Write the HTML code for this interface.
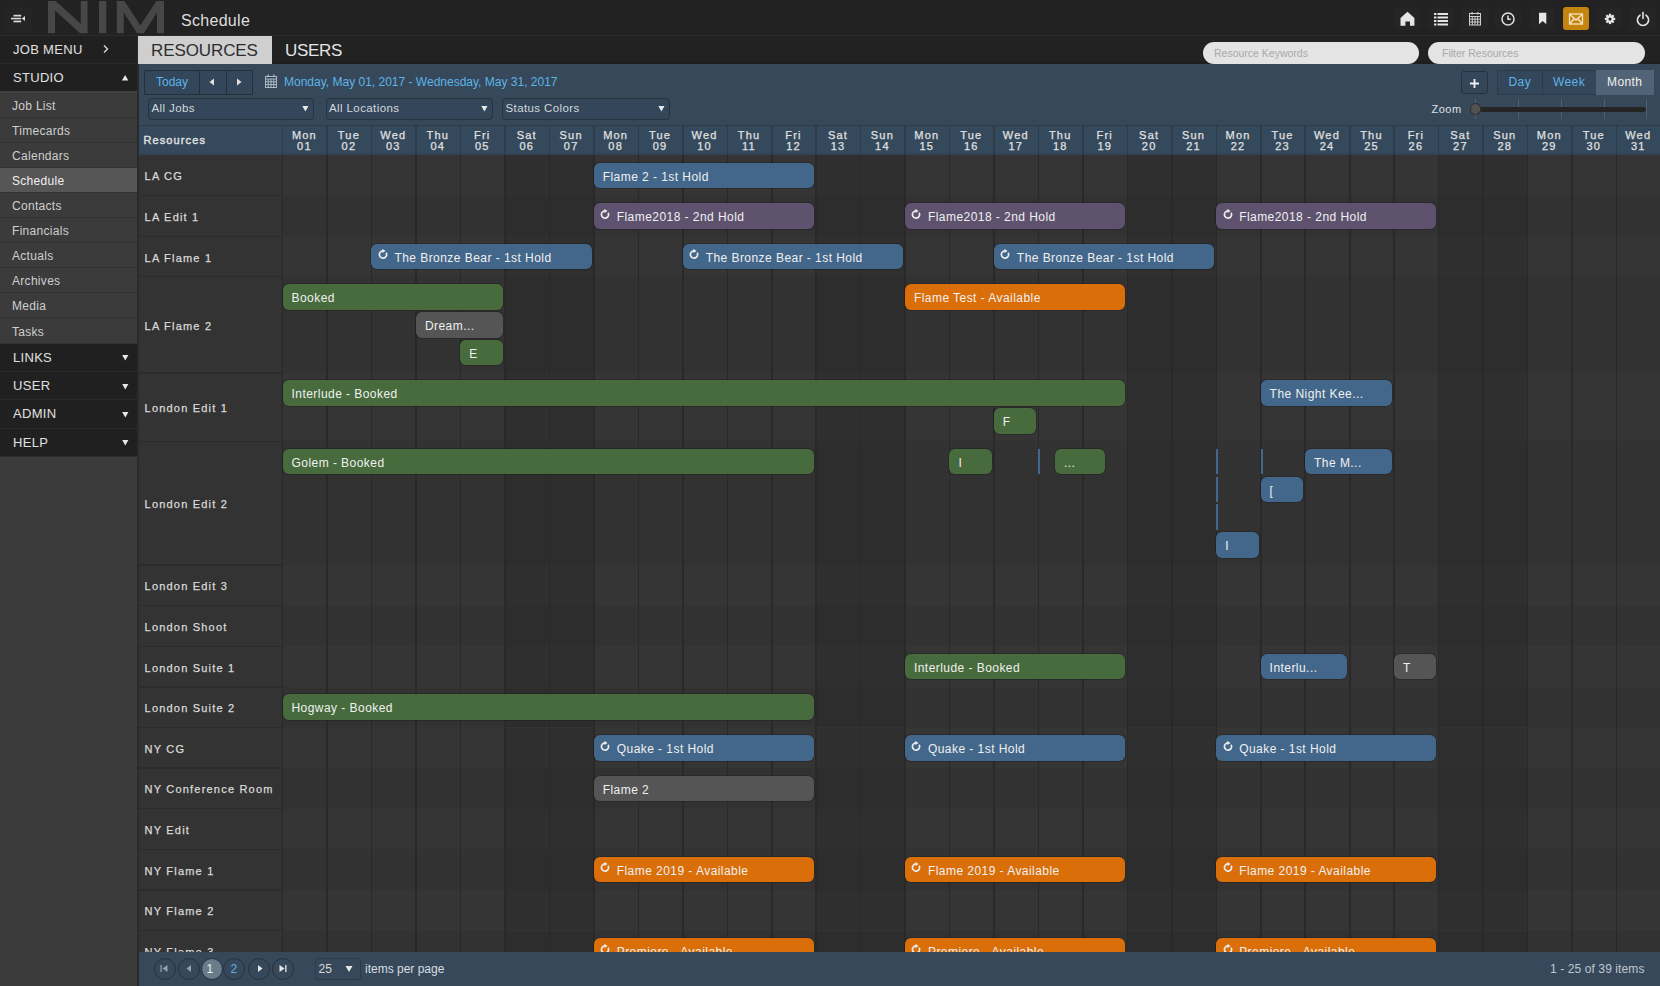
<!DOCTYPE html><html><head><meta charset="utf-8"><style>
*{margin:0;padding:0;box-sizing:border-box}
html,body{width:1660px;height:986px;overflow:hidden;background:#222222;font-family:"Liberation Sans", sans-serif;}
.a{position:absolute}
.t{position:absolute;white-space:nowrap}
.ev{position:absolute;height:25.7px;box-shadow:0 0 0 1px rgba(0,0,0,0.18);border-radius:6px;color:#f0f0f0;font-size:12px;letter-spacing:0.45px;line-height:28px;padding-left:9px;white-space:nowrap;overflow:hidden}
.rn{position:absolute;left:144.6px;color:#dadada;font-size:11px;font-weight:normal;-webkit-text-stroke:0.25px #dadada;letter-spacing:1.2px;white-space:nowrap}
.sbi{position:absolute;left:0;width:137px;height:25.1px;background:#3b3b3b;border-bottom:1px solid #333;color:#cfcfcf;font-size:12px;letter-spacing:0.3px;padding-left:12px;line-height:27px}
.sbh{position:absolute;left:0;width:137px;background:#202020;border-bottom:1px solid #2b2b2b;color:#e0e0e0;font-size:13px;letter-spacing:0.3px;padding-left:13px}
.dh{position:absolute;top:129.5px;width:44.46px;text-align:center;color:#e0e0e0;font-size:11px;font-weight:normal;-webkit-text-stroke:0.25px #e0e0e0;letter-spacing:1.2px;line-height:11px}
</style></head><body>

<div class="a" style="left:0;top:0;width:1660px;height:35px;background:#222222"></div>
<div class="a" style="left:0;top:35px;width:1660px;height:1px;background:#2c2c2c"></div>
<div class="a" style="left:4px;top:7px;width:27.5px;height:25.5px;background:#242424;border-radius:4px"></div>
<svg class="a" style="left:0;top:0" width="36" height="36" viewBox="0 0 36 36"><g fill="#dcdcdc"><rect x="13.5" y="14.8" width="7.7" height="1.7"/><rect x="11" y="17.8" width="10.2" height="1.5"/><rect x="13.5" y="20.6" width="7.7" height="1.7"/><path d="M21.8 18.5L25 16V21Z"/></g></svg>
<svg class="a" style="left:0;top:0" width="170" height="35" viewBox="0 0 170 35"><g fill="#474747"><path d="M48 1H55.6L80.8 23.8V1H87.6V33.3H80.2L55 10.6V33.3H48Z"/><rect x="99" y="1" width="7.3" height="32.3"/><path d="M116.8 1H124.4L140.4 25.5L156.4 1H164V33.3H157V12.5L143.8 33.3H137L123.8 12.5V33.3H116.8Z"/></g></svg>
<div class="t" style="left:181px;top:12px;font-size:16px;color:#dedede;letter-spacing:0.3px;line-height:18px">Schedule</div>
<div class="a" style="left:1394px;top:7.3px;width:26px;height:22.4px;background:#252525;border-radius:3px"></div>
<div class="a" style="left:1428px;top:7.3px;width:26px;height:22.4px;background:#252525;border-radius:3px"></div>
<div class="a" style="left:1462px;top:7.3px;width:26px;height:22.4px;background:#252525;border-radius:3px"></div>
<div class="a" style="left:1495px;top:7.3px;width:26px;height:22.4px;background:#252525;border-radius:3px"></div>
<div class="a" style="left:1529px;top:7.3px;width:26px;height:22.4px;background:#252525;border-radius:3px"></div>
<div class="a" style="left:1563px;top:7.3px;width:26px;height:22.4px;background:#c4850f;border-radius:3px"></div>
<div class="a" style="left:1596px;top:7.3px;width:26px;height:22.4px;background:#252525;border-radius:3px"></div>
<div class="a" style="left:1630px;top:7.3px;width:26px;height:22.4px;background:#252525;border-radius:3px"></div>
<svg class="a" style="left:1399px;top:11px" width="16" height="16" viewBox="0 0 16 16"><path d="M1.5 7L8.5 0.8L15.4 7V14.7H11V10.5H6.4V14.7H1.5Z" fill="#e6e6e6"/></svg>
<svg class="a" style="left:1433px;top:11px" width="16" height="16" viewBox="0 0 16 16"><g fill="#e4e4e4"><rect x="1" y="2" width="2.4" height="2"/><rect x="4.5" y="2" width="10.5" height="2"/><rect x="1" y="5.5" width="2.4" height="2"/><rect x="4.5" y="5.5" width="10.5" height="2"/><rect x="1" y="9" width="2.4" height="2"/><rect x="4.5" y="9" width="10.5" height="2"/><rect x="1" y="12.5" width="2.4" height="2"/><rect x="4.5" y="12.5" width="10.5" height="2"/></g></svg>
<svg class="a" style="left:1467px;top:11px" width="16" height="16" viewBox="0 0 16 16"><g fill="none" stroke="#cfcfcf" stroke-width="1"><rect x="2.5" y="2.5" width="11" height="11.5"/><path d="M2.5 5.5H13.5M2.5 8.2H13.5M2.5 11H13.5M5.3 5.5V14M8 5.5V14M10.7 5.5V14"/></g><rect x="4.5" y="1" width="1.2" height="2.5" fill="#cfcfcf"/><rect x="10.3" y="1" width="1.2" height="2.5" fill="#cfcfcf"/></svg>
<svg class="a" style="left:1500px;top:11px" width="16" height="16" viewBox="0 0 16 16"><g fill="none" stroke="#e0e0e0" stroke-width="1.5"><circle cx="8" cy="8" r="6"/><path d="M8 4.5V8.3H10.8"/></g></svg>
<svg class="a" style="left:1534px;top:11px" width="16" height="16" viewBox="0 0 16 16"><path d="M5 1.7H12.3V13.2L8.65 9.9L5 13.2Z" fill="#e6e6e6"/></svg>
<svg class="a" style="left:1568px;top:11px" width="16" height="16" viewBox="0 0 16 16"><g fill="none" stroke="#f4e4c4" stroke-width="1.3"><rect x="1.5" y="3" width="13" height="10"/><path d="M1.5 3L8 9L14.5 3M1.5 13L6 8M14.5 13L10 8"/></g></svg>
<svg class="a" style="left:1601px;top:11px" width="16" height="16" viewBox="0 0 16 16"><g fill="#e6e6e6"><circle cx="9" cy="7.9" r="3.7"/><rect x="7.9" y="2.7" width="2.2" height="10.4"/><rect x="3.8" y="6.8" width="10.4" height="2.2"/><rect x="7.9" y="2.7" width="2.2" height="10.4" transform="rotate(45 9 7.9)"/><rect x="7.9" y="2.7" width="2.2" height="10.4" transform="rotate(-45 9 7.9)"/></g><circle cx="9" cy="7.9" r="1.5" fill="#1a1a1a"/></svg>
<svg class="a" style="left:1635px;top:11px" width="16" height="16" viewBox="0 0 16 16"><g fill="none" stroke="#e4e4e4" stroke-width="1.6" stroke-linecap="round"><path d="M5 4.2A5.6 5.6 0 1 0 11 4.2"/><path d="M8 1.5V7.5"/></g></svg>
<div class="a" style="left:0;top:36px;width:137px;height:950px;background:#3b3b3b"></div>
<div class="a" style="left:136.5px;top:36px;width:2px;height:950px;background:#2a2a2a"></div>
<div class="sbh" style="top:35.5px;height:28px;line-height:27px">JOB MENU</div>
<svg class="a" style="left:102px;top:44px" width="8" height="10" viewBox="0 0 8 10"><path d="M2 1.5L5.5 5L2 8.5" fill="none" stroke="#d8d8d8" stroke-width="1.4"/></svg>
<div class="sbh" style="top:63.5px;height:28px;line-height:28px">STUDIO</div>
<svg class="a" style="left:121.5px;top:75.3px" width="7" height="6" viewBox="0 0 7 6"><path d="M0 5.4L3.1 0L6.2 5.4Z" fill="#e8e8e8"/></svg>
<div class="a" style="left:0;top:91.4px;width:137px;height:1.2px;background:#414141"></div>
<div class="sbi" style="top:92.5px;background:#3b3b3b;color:#cfcfcf">Job List</div>
<div class="sbi" style="top:117.6px;background:#3b3b3b;color:#cfcfcf">Timecards</div>
<div class="sbi" style="top:142.7px;background:#3b3b3b;color:#cfcfcf">Calendars</div>
<div class="sbi" style="top:167.8px;background:#565656;color:#f0f0f0">Schedule</div>
<div class="sbi" style="top:192.9px;background:#3b3b3b;color:#cfcfcf">Contacts</div>
<div class="sbi" style="top:218.1px;background:#3b3b3b;color:#cfcfcf">Financials</div>
<div class="sbi" style="top:243.2px;background:#3b3b3b;color:#cfcfcf">Actuals</div>
<div class="sbi" style="top:268.3px;background:#3b3b3b;color:#cfcfcf">Archives</div>
<div class="sbi" style="top:293.4px;background:#3b3b3b;color:#cfcfcf">Media</div>
<div class="sbi" style="top:318.5px;background:#3b3b3b;color:#cfcfcf">Tasks</div>
<div class="sbh" style="top:343.6px;height:28.4px;line-height:28px">LINKS</div>
<svg class="a" style="left:121.6px;top:355.2px" width="7" height="6" viewBox="0 0 7 6"><path d="M0.2 0L3.3 5.4L6.4 0Z" fill="#e8e8e8"/></svg>
<div class="sbh" style="top:372.0px;height:28.4px;line-height:28px">USER</div>
<svg class="a" style="left:121.6px;top:383.6px" width="7" height="6" viewBox="0 0 7 6"><path d="M0.2 0L3.3 5.4L6.4 0Z" fill="#e8e8e8"/></svg>
<div class="sbh" style="top:400.3px;height:28.4px;line-height:28px">ADMIN</div>
<svg class="a" style="left:121.6px;top:411.9px" width="7" height="6" viewBox="0 0 7 6"><path d="M0.2 0L3.3 5.4L6.4 0Z" fill="#e8e8e8"/></svg>
<div class="sbh" style="top:428.7px;height:28.4px;line-height:28px">HELP</div>
<svg class="a" style="left:121.6px;top:440.3px" width="7" height="6" viewBox="0 0 7 6"><path d="M0.2 0L3.3 5.4L6.4 0Z" fill="#e8e8e8"/></svg>
<div class="a" style="left:272px;top:60.5px;width:1388px;height:3px;background:#1e1e1e"></div>
<div class="a" style="left:138px;top:35.5px;width:134px;height:28px;background:#cfcfcf"></div>
<div class="t" style="left:151px;top:41px;font-size:17px;color:#2d2d2d;letter-spacing:-0.1px;line-height:20px">RESOURCES</div>
<div class="t" style="left:285px;top:41px;font-size:17px;color:#e4e4e4;letter-spacing:-0.3px;line-height:20px">USERS</div>
<div class="a" style="left:1202.5px;top:42px;width:216px;height:21.5px;border-radius:11px;background:#e4e4e4"></div>
<div class="t" style="left:1214px;top:46.5px;font-size:10.5px;color:#a9a9a9;line-height:13px">Resource Keywords</div>
<div class="a" style="left:1428px;top:42px;width:217px;height:21.5px;border-radius:11px;background:#e4e4e4"></div>
<div class="t" style="left:1442px;top:46.5px;font-size:10.5px;color:#a9a9a9;line-height:13px">Filter Resources</div>
<div class="a" style="left:138.5px;top:63.5px;width:1521.5px;height:62px;background:#36485a"></div>
<div class="a" style="left:144px;top:69.5px;width:109px;height:25px;border:1px solid #24313c;border-radius:1px;background:#33465a"></div>
<div class="a" style="left:198.5px;top:70px;width:1.5px;height:24px;background:#24313c"></div>
<div class="a" style="left:225.5px;top:70px;width:1.5px;height:24px;background:#24313c"></div>
<div class="t" style="left:156px;top:75px;font-size:12px;color:#5db4e6;letter-spacing:0px;line-height:14px">Today</div>
<svg class="a" style="left:209px;top:78px" width="6" height="8" viewBox="0 0 6 8"><path d="M5 0.5V7.5L0.5 4Z" fill="#e0e0e0"/></svg>
<svg class="a" style="left:236px;top:78px" width="6" height="8" viewBox="0 0 6 8"><path d="M1 0.5V7.5L5.5 4Z" fill="#e0e0e0"/></svg>
<svg class="a" style="left:265px;top:74px" width="12" height="14" viewBox="0 0 12 14"><g fill="none" stroke="#b8c4cf" stroke-width="0.9"><rect x="0.5" y="2.5" width="11" height="11"/><path d="M0.5 5H11.5M0.5 7.8H11.5M0.5 10.6H11.5M3.2 5V13.5M6 5V13.5M8.8 5V13.5"/></g><rect x="2.5" y="0.5" width="1.2" height="2.5" fill="#b8c4cf"/><rect x="8.3" y="0.5" width="1.2" height="2.5" fill="#b8c4cf"/></svg>
<div class="t" style="left:284px;top:75px;font-size:12px;color:#5db4e6;letter-spacing:0px;line-height:14px">Monday, May 01, 2017 - Wednesday, May 31, 2017</div>
<div class="a" style="left:148px;top:97.5px;width:166px;height:22px;border:1px solid #26333f;border-radius:4px;background:#33465a"></div>
<div class="t" style="left:151.5px;top:101px;font-size:11.5px;color:#d4d8dc;letter-spacing:0.4px;line-height:14px">All Jobs</div>
<svg class="a" style="left:302px;top:105.5px" width="7" height="6" viewBox="0 0 7 6"><path d="M0.3 0L3.4 5.4L6.5 0Z" fill="#e8e8e8"/></svg>
<div class="a" style="left:325.5px;top:97.5px;width:167px;height:22px;border:1px solid #26333f;border-radius:4px;background:#33465a"></div>
<div class="t" style="left:329.0px;top:101px;font-size:11.5px;color:#d4d8dc;letter-spacing:0.4px;line-height:14px">All Locations</div>
<svg class="a" style="left:480.5px;top:105.5px" width="7" height="6" viewBox="0 0 7 6"><path d="M0.3 0L3.4 5.4L6.5 0Z" fill="#e8e8e8"/></svg>
<div class="a" style="left:502px;top:97.5px;width:168px;height:22px;border:1px solid #26333f;border-radius:4px;background:#33465a"></div>
<div class="t" style="left:505.5px;top:101px;font-size:11.5px;color:#d4d8dc;letter-spacing:0.4px;line-height:14px">Status Colors</div>
<svg class="a" style="left:658px;top:105.5px" width="7" height="6" viewBox="0 0 7 6"><path d="M0.3 0L3.4 5.4L6.5 0Z" fill="#e8e8e8"/></svg>
<div class="a" style="left:1461px;top:71px;width:27px;height:23px;border:1.5px solid #26333e;border-radius:3px;background:#33465a"></div>
<svg class="a" style="left:1470px;top:78.5px" width="9" height="9" viewBox="0 0 9 9"><path d="M4.5 0V9M0 4.5H9" stroke="#eef0f2" stroke-width="1.8"/></svg>
<div class="a" style="left:1496.5px;top:69.5px;width:157.5px;height:25.5px;border:1px solid #2b3b4a;border-radius:2px;background:#33465a"></div>
<div class="a" style="left:1542px;top:70px;width:1px;height:25px;background:#2b3b4a"></div>
<div class="a" style="left:1596px;top:70px;width:58px;height:24.5px;background:#516477"></div>
<div class="t" style="left:1508.5px;top:75px;font-size:12px;color:#5db4e6;letter-spacing:0.4px;line-height:14px">Day</div>
<div class="t" style="left:1553px;top:75px;font-size:12px;color:#5db4e6;letter-spacing:0.4px;line-height:14px">Week</div>
<div class="t" style="left:1607px;top:75px;font-size:12px;color:#f0f0f0;letter-spacing:0.4px;line-height:14px">Month</div>
<div class="t" style="left:1431.5px;top:103px;font-size:11px;color:#e0e0e0;letter-spacing:0.5px;line-height:13px">Zoom</div>
<div class="a" style="left:1474.9px;top:98.5px;width:1px;height:20px;background:#52606e"></div>
<div class="a" style="left:1517.8px;top:98.5px;width:1px;height:20px;background:#52606e"></div>
<div class="a" style="left:1560.9px;top:98.5px;width:1px;height:20px;background:#52606e"></div>
<div class="a" style="left:1603.8px;top:98.5px;width:1px;height:20px;background:#52606e"></div>
<div class="a" style="left:1646.2px;top:98.5px;width:1px;height:20px;background:#52606e"></div>
<div class="a" style="left:1470px;top:106.5px;width:176px;height:5px;border-radius:2.5px;background:#252525"></div>
<div class="a" style="left:1469.6px;top:103.2px;width:11.6px;height:11.6px;border-radius:50%;background:#525252;border:1px solid #2e2e2e"></div>
<div class="a" style="left:138.5px;top:124.5px;width:1521.5px;height:1px;background:#2c3c4b"></div>
<div class="a" style="left:138.5px;top:125.5px;width:1521.5px;height:29.5px;background:#35495c"></div>
<div class="a" style="left:138.5px;top:153px;width:1521.5px;height:2px;background:#314354"></div>
<div class="t" style="left:143.5px;top:134px;font-size:11px;font-weight:normal;-webkit-text-stroke:0.4px #e0e0e0;color:#e0e0e0;letter-spacing:1.1px;line-height:12px">Resources</div>
<div class="a" style="left:281.90px;top:125.5px;width:1.6px;height:29.5px;background:#2c3c4b"></div>
<div class="dh" style="left:282.20px">Mon<br>01</div>
<div class="a" style="left:326.36px;top:125.5px;width:1.6px;height:29.5px;background:#2c3c4b"></div>
<div class="dh" style="left:326.66px">Tue<br>02</div>
<div class="a" style="left:370.82px;top:125.5px;width:1.6px;height:29.5px;background:#2c3c4b"></div>
<div class="dh" style="left:371.12px">Wed<br>03</div>
<div class="a" style="left:415.28px;top:125.5px;width:1.6px;height:29.5px;background:#2c3c4b"></div>
<div class="dh" style="left:415.58px">Thu<br>04</div>
<div class="a" style="left:459.74px;top:125.5px;width:1.6px;height:29.5px;background:#2c3c4b"></div>
<div class="dh" style="left:460.04px">Fri<br>05</div>
<div class="a" style="left:504.20px;top:125.5px;width:1.6px;height:29.5px;background:#2c3c4b"></div>
<div class="dh" style="left:504.50px">Sat<br>06</div>
<div class="a" style="left:548.66px;top:125.5px;width:1.6px;height:29.5px;background:#2c3c4b"></div>
<div class="dh" style="left:548.96px">Sun<br>07</div>
<div class="a" style="left:593.12px;top:125.5px;width:1.6px;height:29.5px;background:#2c3c4b"></div>
<div class="dh" style="left:593.42px">Mon<br>08</div>
<div class="a" style="left:637.58px;top:125.5px;width:1.6px;height:29.5px;background:#2c3c4b"></div>
<div class="dh" style="left:637.88px">Tue<br>09</div>
<div class="a" style="left:682.04px;top:125.5px;width:1.6px;height:29.5px;background:#2c3c4b"></div>
<div class="dh" style="left:682.34px">Wed<br>10</div>
<div class="a" style="left:726.50px;top:125.5px;width:1.6px;height:29.5px;background:#2c3c4b"></div>
<div class="dh" style="left:726.80px">Thu<br>11</div>
<div class="a" style="left:770.96px;top:125.5px;width:1.6px;height:29.5px;background:#2c3c4b"></div>
<div class="dh" style="left:771.26px">Fri<br>12</div>
<div class="a" style="left:815.42px;top:125.5px;width:1.6px;height:29.5px;background:#2c3c4b"></div>
<div class="dh" style="left:815.72px">Sat<br>13</div>
<div class="a" style="left:859.88px;top:125.5px;width:1.6px;height:29.5px;background:#2c3c4b"></div>
<div class="dh" style="left:860.18px">Sun<br>14</div>
<div class="a" style="left:904.34px;top:125.5px;width:1.6px;height:29.5px;background:#2c3c4b"></div>
<div class="dh" style="left:904.64px">Mon<br>15</div>
<div class="a" style="left:948.80px;top:125.5px;width:1.6px;height:29.5px;background:#2c3c4b"></div>
<div class="dh" style="left:949.10px">Tue<br>16</div>
<div class="a" style="left:993.26px;top:125.5px;width:1.6px;height:29.5px;background:#2c3c4b"></div>
<div class="dh" style="left:993.56px">Wed<br>17</div>
<div class="a" style="left:1037.72px;top:125.5px;width:1.6px;height:29.5px;background:#2c3c4b"></div>
<div class="dh" style="left:1038.02px">Thu<br>18</div>
<div class="a" style="left:1082.18px;top:125.5px;width:1.6px;height:29.5px;background:#2c3c4b"></div>
<div class="dh" style="left:1082.48px">Fri<br>19</div>
<div class="a" style="left:1126.64px;top:125.5px;width:1.6px;height:29.5px;background:#2c3c4b"></div>
<div class="dh" style="left:1126.94px">Sat<br>20</div>
<div class="a" style="left:1171.10px;top:125.5px;width:1.6px;height:29.5px;background:#2c3c4b"></div>
<div class="dh" style="left:1171.40px">Sun<br>21</div>
<div class="a" style="left:1215.56px;top:125.5px;width:1.6px;height:29.5px;background:#2c3c4b"></div>
<div class="dh" style="left:1215.86px">Mon<br>22</div>
<div class="a" style="left:1260.02px;top:125.5px;width:1.6px;height:29.5px;background:#2c3c4b"></div>
<div class="dh" style="left:1260.32px">Tue<br>23</div>
<div class="a" style="left:1304.48px;top:125.5px;width:1.6px;height:29.5px;background:#2c3c4b"></div>
<div class="dh" style="left:1304.78px">Wed<br>24</div>
<div class="a" style="left:1348.94px;top:125.5px;width:1.6px;height:29.5px;background:#2c3c4b"></div>
<div class="dh" style="left:1349.24px">Thu<br>25</div>
<div class="a" style="left:1393.40px;top:125.5px;width:1.6px;height:29.5px;background:#2c3c4b"></div>
<div class="dh" style="left:1393.70px">Fri<br>26</div>
<div class="a" style="left:1437.86px;top:125.5px;width:1.6px;height:29.5px;background:#2c3c4b"></div>
<div class="dh" style="left:1438.16px">Sat<br>27</div>
<div class="a" style="left:1482.32px;top:125.5px;width:1.6px;height:29.5px;background:#2c3c4b"></div>
<div class="dh" style="left:1482.62px">Sun<br>28</div>
<div class="a" style="left:1526.78px;top:125.5px;width:1.6px;height:29.5px;background:#2c3c4b"></div>
<div class="dh" style="left:1527.08px">Mon<br>29</div>
<div class="a" style="left:1571.24px;top:125.5px;width:1.6px;height:29.5px;background:#2c3c4b"></div>
<div class="dh" style="left:1571.54px">Tue<br>30</div>
<div class="a" style="left:1615.70px;top:125.5px;width:1.6px;height:29.5px;background:#2c3c4b"></div>
<div class="dh" style="left:1616.00px">Wed<br>31</div>
<div class="a" style="left:138.5px;top:155px;width:1521.5px;height:800px;background:#333333"></div>
<div class="a" style="left:282px;top:155.00px;width:1378px;height:40.60px;background:#353535"></div>
<div class="a" style="left:504.50px;top:155.00px;width:44.46px;height:40.60px;background:#2f2f2f"></div>
<div class="a" style="left:548.96px;top:155.00px;width:44.46px;height:40.60px;background:#2f2f2f"></div>
<div class="a" style="left:815.72px;top:155.00px;width:44.46px;height:40.60px;background:#2f2f2f"></div>
<div class="a" style="left:860.18px;top:155.00px;width:44.46px;height:40.60px;background:#2f2f2f"></div>
<div class="a" style="left:1126.94px;top:155.00px;width:44.46px;height:40.60px;background:#2f2f2f"></div>
<div class="a" style="left:1171.40px;top:155.00px;width:44.46px;height:40.60px;background:#2f2f2f"></div>
<div class="a" style="left:1438.16px;top:155.00px;width:44.46px;height:40.60px;background:#2f2f2f"></div>
<div class="a" style="left:1482.62px;top:155.00px;width:44.46px;height:40.60px;background:#2f2f2f"></div>
<div class="a" style="left:138.5px;top:155.00px;width:143px;height:40.60px;background:#333333"></div>
<div class="rn" style="top:169.30px;line-height:14px">LA CG</div>
<div class="a" style="left:282px;top:195.60px;width:1378px;height:40.60px;background:#323232"></div>
<div class="a" style="left:504.50px;top:195.60px;width:44.46px;height:40.60px;background:#2d2d2d"></div>
<div class="a" style="left:548.96px;top:195.60px;width:44.46px;height:40.60px;background:#2d2d2d"></div>
<div class="a" style="left:815.72px;top:195.60px;width:44.46px;height:40.60px;background:#2d2d2d"></div>
<div class="a" style="left:860.18px;top:195.60px;width:44.46px;height:40.60px;background:#2d2d2d"></div>
<div class="a" style="left:1126.94px;top:195.60px;width:44.46px;height:40.60px;background:#2d2d2d"></div>
<div class="a" style="left:1171.40px;top:195.60px;width:44.46px;height:40.60px;background:#2d2d2d"></div>
<div class="a" style="left:1438.16px;top:195.60px;width:44.46px;height:40.60px;background:#2d2d2d"></div>
<div class="a" style="left:1482.62px;top:195.60px;width:44.46px;height:40.60px;background:#2d2d2d"></div>
<div class="a" style="left:138.5px;top:195.60px;width:143px;height:40.60px;background:#333333"></div>
<div class="rn" style="top:209.90px;line-height:14px">LA Edit 1</div>
<div class="a" style="left:282px;top:236.20px;width:1378px;height:40.60px;background:#353535"></div>
<div class="a" style="left:504.50px;top:236.20px;width:44.46px;height:40.60px;background:#2f2f2f"></div>
<div class="a" style="left:548.96px;top:236.20px;width:44.46px;height:40.60px;background:#2f2f2f"></div>
<div class="a" style="left:815.72px;top:236.20px;width:44.46px;height:40.60px;background:#2f2f2f"></div>
<div class="a" style="left:860.18px;top:236.20px;width:44.46px;height:40.60px;background:#2f2f2f"></div>
<div class="a" style="left:1126.94px;top:236.20px;width:44.46px;height:40.60px;background:#2f2f2f"></div>
<div class="a" style="left:1171.40px;top:236.20px;width:44.46px;height:40.60px;background:#2f2f2f"></div>
<div class="a" style="left:1438.16px;top:236.20px;width:44.46px;height:40.60px;background:#2f2f2f"></div>
<div class="a" style="left:1482.62px;top:236.20px;width:44.46px;height:40.60px;background:#2f2f2f"></div>
<div class="a" style="left:138.5px;top:236.20px;width:143px;height:40.60px;background:#333333"></div>
<div class="rn" style="top:250.50px;line-height:14px">LA Flame 1</div>
<div class="a" style="left:282px;top:276.80px;width:1378px;height:96.10px;background:#323232"></div>
<div class="a" style="left:504.50px;top:276.80px;width:44.46px;height:96.10px;background:#2d2d2d"></div>
<div class="a" style="left:548.96px;top:276.80px;width:44.46px;height:96.10px;background:#2d2d2d"></div>
<div class="a" style="left:815.72px;top:276.80px;width:44.46px;height:96.10px;background:#2d2d2d"></div>
<div class="a" style="left:860.18px;top:276.80px;width:44.46px;height:96.10px;background:#2d2d2d"></div>
<div class="a" style="left:1126.94px;top:276.80px;width:44.46px;height:96.10px;background:#2d2d2d"></div>
<div class="a" style="left:1171.40px;top:276.80px;width:44.46px;height:96.10px;background:#2d2d2d"></div>
<div class="a" style="left:1438.16px;top:276.80px;width:44.46px;height:96.10px;background:#2d2d2d"></div>
<div class="a" style="left:1482.62px;top:276.80px;width:44.46px;height:96.10px;background:#2d2d2d"></div>
<div class="a" style="left:138.5px;top:276.80px;width:143px;height:96.10px;background:#333333"></div>
<div class="rn" style="top:318.85px;line-height:14px">LA Flame 2</div>
<div class="a" style="left:282px;top:372.90px;width:1378px;height:68.35px;background:#353535"></div>
<div class="a" style="left:504.50px;top:372.90px;width:44.46px;height:68.35px;background:#2f2f2f"></div>
<div class="a" style="left:548.96px;top:372.90px;width:44.46px;height:68.35px;background:#2f2f2f"></div>
<div class="a" style="left:815.72px;top:372.90px;width:44.46px;height:68.35px;background:#2f2f2f"></div>
<div class="a" style="left:860.18px;top:372.90px;width:44.46px;height:68.35px;background:#2f2f2f"></div>
<div class="a" style="left:1126.94px;top:372.90px;width:44.46px;height:68.35px;background:#2f2f2f"></div>
<div class="a" style="left:1171.40px;top:372.90px;width:44.46px;height:68.35px;background:#2f2f2f"></div>
<div class="a" style="left:1438.16px;top:372.90px;width:44.46px;height:68.35px;background:#2f2f2f"></div>
<div class="a" style="left:1482.62px;top:372.90px;width:44.46px;height:68.35px;background:#2f2f2f"></div>
<div class="a" style="left:138.5px;top:372.90px;width:143px;height:68.35px;background:#333333"></div>
<div class="rn" style="top:401.07px;line-height:14px">London Edit 1</div>
<div class="a" style="left:282px;top:441.25px;width:1378px;height:123.85px;background:#323232"></div>
<div class="a" style="left:504.50px;top:441.25px;width:44.46px;height:123.85px;background:#2d2d2d"></div>
<div class="a" style="left:548.96px;top:441.25px;width:44.46px;height:123.85px;background:#2d2d2d"></div>
<div class="a" style="left:815.72px;top:441.25px;width:44.46px;height:123.85px;background:#2d2d2d"></div>
<div class="a" style="left:860.18px;top:441.25px;width:44.46px;height:123.85px;background:#2d2d2d"></div>
<div class="a" style="left:1126.94px;top:441.25px;width:44.46px;height:123.85px;background:#2d2d2d"></div>
<div class="a" style="left:1171.40px;top:441.25px;width:44.46px;height:123.85px;background:#2d2d2d"></div>
<div class="a" style="left:1438.16px;top:441.25px;width:44.46px;height:123.85px;background:#2d2d2d"></div>
<div class="a" style="left:1482.62px;top:441.25px;width:44.46px;height:123.85px;background:#2d2d2d"></div>
<div class="a" style="left:138.5px;top:441.25px;width:143px;height:123.85px;background:#333333"></div>
<div class="rn" style="top:497.18px;line-height:14px">London Edit 2</div>
<div class="a" style="left:282px;top:565.10px;width:1378px;height:40.60px;background:#353535"></div>
<div class="a" style="left:504.50px;top:565.10px;width:44.46px;height:40.60px;background:#2f2f2f"></div>
<div class="a" style="left:548.96px;top:565.10px;width:44.46px;height:40.60px;background:#2f2f2f"></div>
<div class="a" style="left:815.72px;top:565.10px;width:44.46px;height:40.60px;background:#2f2f2f"></div>
<div class="a" style="left:860.18px;top:565.10px;width:44.46px;height:40.60px;background:#2f2f2f"></div>
<div class="a" style="left:1126.94px;top:565.10px;width:44.46px;height:40.60px;background:#2f2f2f"></div>
<div class="a" style="left:1171.40px;top:565.10px;width:44.46px;height:40.60px;background:#2f2f2f"></div>
<div class="a" style="left:1438.16px;top:565.10px;width:44.46px;height:40.60px;background:#2f2f2f"></div>
<div class="a" style="left:1482.62px;top:565.10px;width:44.46px;height:40.60px;background:#2f2f2f"></div>
<div class="a" style="left:138.5px;top:565.10px;width:143px;height:40.60px;background:#333333"></div>
<div class="rn" style="top:579.40px;line-height:14px">London Edit 3</div>
<div class="a" style="left:282px;top:605.70px;width:1378px;height:40.60px;background:#323232"></div>
<div class="a" style="left:504.50px;top:605.70px;width:44.46px;height:40.60px;background:#2d2d2d"></div>
<div class="a" style="left:548.96px;top:605.70px;width:44.46px;height:40.60px;background:#2d2d2d"></div>
<div class="a" style="left:815.72px;top:605.70px;width:44.46px;height:40.60px;background:#2d2d2d"></div>
<div class="a" style="left:860.18px;top:605.70px;width:44.46px;height:40.60px;background:#2d2d2d"></div>
<div class="a" style="left:1126.94px;top:605.70px;width:44.46px;height:40.60px;background:#2d2d2d"></div>
<div class="a" style="left:1171.40px;top:605.70px;width:44.46px;height:40.60px;background:#2d2d2d"></div>
<div class="a" style="left:1438.16px;top:605.70px;width:44.46px;height:40.60px;background:#2d2d2d"></div>
<div class="a" style="left:1482.62px;top:605.70px;width:44.46px;height:40.60px;background:#2d2d2d"></div>
<div class="a" style="left:138.5px;top:605.70px;width:143px;height:40.60px;background:#333333"></div>
<div class="rn" style="top:620.00px;line-height:14px">London Shoot</div>
<div class="a" style="left:282px;top:646.30px;width:1378px;height:40.60px;background:#353535"></div>
<div class="a" style="left:504.50px;top:646.30px;width:44.46px;height:40.60px;background:#2f2f2f"></div>
<div class="a" style="left:548.96px;top:646.30px;width:44.46px;height:40.60px;background:#2f2f2f"></div>
<div class="a" style="left:815.72px;top:646.30px;width:44.46px;height:40.60px;background:#2f2f2f"></div>
<div class="a" style="left:860.18px;top:646.30px;width:44.46px;height:40.60px;background:#2f2f2f"></div>
<div class="a" style="left:1126.94px;top:646.30px;width:44.46px;height:40.60px;background:#2f2f2f"></div>
<div class="a" style="left:1171.40px;top:646.30px;width:44.46px;height:40.60px;background:#2f2f2f"></div>
<div class="a" style="left:1438.16px;top:646.30px;width:44.46px;height:40.60px;background:#2f2f2f"></div>
<div class="a" style="left:1482.62px;top:646.30px;width:44.46px;height:40.60px;background:#2f2f2f"></div>
<div class="a" style="left:138.5px;top:646.30px;width:143px;height:40.60px;background:#333333"></div>
<div class="rn" style="top:660.60px;line-height:14px">London Suite 1</div>
<div class="a" style="left:282px;top:686.90px;width:1378px;height:40.60px;background:#323232"></div>
<div class="a" style="left:504.50px;top:686.90px;width:44.46px;height:40.60px;background:#2d2d2d"></div>
<div class="a" style="left:548.96px;top:686.90px;width:44.46px;height:40.60px;background:#2d2d2d"></div>
<div class="a" style="left:815.72px;top:686.90px;width:44.46px;height:40.60px;background:#2d2d2d"></div>
<div class="a" style="left:860.18px;top:686.90px;width:44.46px;height:40.60px;background:#2d2d2d"></div>
<div class="a" style="left:1126.94px;top:686.90px;width:44.46px;height:40.60px;background:#2d2d2d"></div>
<div class="a" style="left:1171.40px;top:686.90px;width:44.46px;height:40.60px;background:#2d2d2d"></div>
<div class="a" style="left:1438.16px;top:686.90px;width:44.46px;height:40.60px;background:#2d2d2d"></div>
<div class="a" style="left:1482.62px;top:686.90px;width:44.46px;height:40.60px;background:#2d2d2d"></div>
<div class="a" style="left:138.5px;top:686.90px;width:143px;height:40.60px;background:#333333"></div>
<div class="rn" style="top:701.20px;line-height:14px">London Suite 2</div>
<div class="a" style="left:282px;top:727.50px;width:1378px;height:40.60px;background:#353535"></div>
<div class="a" style="left:504.50px;top:727.50px;width:44.46px;height:40.60px;background:#2f2f2f"></div>
<div class="a" style="left:548.96px;top:727.50px;width:44.46px;height:40.60px;background:#2f2f2f"></div>
<div class="a" style="left:815.72px;top:727.50px;width:44.46px;height:40.60px;background:#2f2f2f"></div>
<div class="a" style="left:860.18px;top:727.50px;width:44.46px;height:40.60px;background:#2f2f2f"></div>
<div class="a" style="left:1126.94px;top:727.50px;width:44.46px;height:40.60px;background:#2f2f2f"></div>
<div class="a" style="left:1171.40px;top:727.50px;width:44.46px;height:40.60px;background:#2f2f2f"></div>
<div class="a" style="left:1438.16px;top:727.50px;width:44.46px;height:40.60px;background:#2f2f2f"></div>
<div class="a" style="left:1482.62px;top:727.50px;width:44.46px;height:40.60px;background:#2f2f2f"></div>
<div class="a" style="left:138.5px;top:727.50px;width:143px;height:40.60px;background:#333333"></div>
<div class="rn" style="top:741.80px;line-height:14px">NY CG</div>
<div class="a" style="left:282px;top:768.10px;width:1378px;height:40.60px;background:#323232"></div>
<div class="a" style="left:504.50px;top:768.10px;width:44.46px;height:40.60px;background:#2d2d2d"></div>
<div class="a" style="left:548.96px;top:768.10px;width:44.46px;height:40.60px;background:#2d2d2d"></div>
<div class="a" style="left:815.72px;top:768.10px;width:44.46px;height:40.60px;background:#2d2d2d"></div>
<div class="a" style="left:860.18px;top:768.10px;width:44.46px;height:40.60px;background:#2d2d2d"></div>
<div class="a" style="left:1126.94px;top:768.10px;width:44.46px;height:40.60px;background:#2d2d2d"></div>
<div class="a" style="left:1171.40px;top:768.10px;width:44.46px;height:40.60px;background:#2d2d2d"></div>
<div class="a" style="left:1438.16px;top:768.10px;width:44.46px;height:40.60px;background:#2d2d2d"></div>
<div class="a" style="left:1482.62px;top:768.10px;width:44.46px;height:40.60px;background:#2d2d2d"></div>
<div class="a" style="left:138.5px;top:768.10px;width:143px;height:40.60px;background:#333333"></div>
<div class="rn" style="top:782.40px;line-height:14px">NY Conference Room</div>
<div class="a" style="left:282px;top:808.70px;width:1378px;height:40.60px;background:#353535"></div>
<div class="a" style="left:504.50px;top:808.70px;width:44.46px;height:40.60px;background:#2f2f2f"></div>
<div class="a" style="left:548.96px;top:808.70px;width:44.46px;height:40.60px;background:#2f2f2f"></div>
<div class="a" style="left:815.72px;top:808.70px;width:44.46px;height:40.60px;background:#2f2f2f"></div>
<div class="a" style="left:860.18px;top:808.70px;width:44.46px;height:40.60px;background:#2f2f2f"></div>
<div class="a" style="left:1126.94px;top:808.70px;width:44.46px;height:40.60px;background:#2f2f2f"></div>
<div class="a" style="left:1171.40px;top:808.70px;width:44.46px;height:40.60px;background:#2f2f2f"></div>
<div class="a" style="left:1438.16px;top:808.70px;width:44.46px;height:40.60px;background:#2f2f2f"></div>
<div class="a" style="left:1482.62px;top:808.70px;width:44.46px;height:40.60px;background:#2f2f2f"></div>
<div class="a" style="left:138.5px;top:808.70px;width:143px;height:40.60px;background:#333333"></div>
<div class="rn" style="top:823.00px;line-height:14px">NY Edit</div>
<div class="a" style="left:282px;top:849.30px;width:1378px;height:40.60px;background:#323232"></div>
<div class="a" style="left:504.50px;top:849.30px;width:44.46px;height:40.60px;background:#2d2d2d"></div>
<div class="a" style="left:548.96px;top:849.30px;width:44.46px;height:40.60px;background:#2d2d2d"></div>
<div class="a" style="left:815.72px;top:849.30px;width:44.46px;height:40.60px;background:#2d2d2d"></div>
<div class="a" style="left:860.18px;top:849.30px;width:44.46px;height:40.60px;background:#2d2d2d"></div>
<div class="a" style="left:1126.94px;top:849.30px;width:44.46px;height:40.60px;background:#2d2d2d"></div>
<div class="a" style="left:1171.40px;top:849.30px;width:44.46px;height:40.60px;background:#2d2d2d"></div>
<div class="a" style="left:1438.16px;top:849.30px;width:44.46px;height:40.60px;background:#2d2d2d"></div>
<div class="a" style="left:1482.62px;top:849.30px;width:44.46px;height:40.60px;background:#2d2d2d"></div>
<div class="a" style="left:138.5px;top:849.30px;width:143px;height:40.60px;background:#333333"></div>
<div class="rn" style="top:863.60px;line-height:14px">NY Flame 1</div>
<div class="a" style="left:282px;top:889.90px;width:1378px;height:40.60px;background:#353535"></div>
<div class="a" style="left:504.50px;top:889.90px;width:44.46px;height:40.60px;background:#2f2f2f"></div>
<div class="a" style="left:548.96px;top:889.90px;width:44.46px;height:40.60px;background:#2f2f2f"></div>
<div class="a" style="left:815.72px;top:889.90px;width:44.46px;height:40.60px;background:#2f2f2f"></div>
<div class="a" style="left:860.18px;top:889.90px;width:44.46px;height:40.60px;background:#2f2f2f"></div>
<div class="a" style="left:1126.94px;top:889.90px;width:44.46px;height:40.60px;background:#2f2f2f"></div>
<div class="a" style="left:1171.40px;top:889.90px;width:44.46px;height:40.60px;background:#2f2f2f"></div>
<div class="a" style="left:1438.16px;top:889.90px;width:44.46px;height:40.60px;background:#2f2f2f"></div>
<div class="a" style="left:1482.62px;top:889.90px;width:44.46px;height:40.60px;background:#2f2f2f"></div>
<div class="a" style="left:138.5px;top:889.90px;width:143px;height:40.60px;background:#333333"></div>
<div class="rn" style="top:904.20px;line-height:14px">NY Flame 2</div>
<div class="a" style="left:282px;top:930.50px;width:1378px;height:40.60px;background:#323232"></div>
<div class="a" style="left:504.50px;top:930.50px;width:44.46px;height:40.60px;background:#2d2d2d"></div>
<div class="a" style="left:548.96px;top:930.50px;width:44.46px;height:40.60px;background:#2d2d2d"></div>
<div class="a" style="left:815.72px;top:930.50px;width:44.46px;height:40.60px;background:#2d2d2d"></div>
<div class="a" style="left:860.18px;top:930.50px;width:44.46px;height:40.60px;background:#2d2d2d"></div>
<div class="a" style="left:1126.94px;top:930.50px;width:44.46px;height:40.60px;background:#2d2d2d"></div>
<div class="a" style="left:1171.40px;top:930.50px;width:44.46px;height:40.60px;background:#2d2d2d"></div>
<div class="a" style="left:1438.16px;top:930.50px;width:44.46px;height:40.60px;background:#2d2d2d"></div>
<div class="a" style="left:1482.62px;top:930.50px;width:44.46px;height:40.60px;background:#2d2d2d"></div>
<div class="a" style="left:138.5px;top:930.50px;width:143px;height:40.60px;background:#333333"></div>
<div class="rn" style="top:944.80px;line-height:14px">NY Flame 3</div>
<div class="a" style="left:138.5px;top:194.90px;width:143px;height:1.4px;background:#2c2c2c"></div>
<div class="a" style="left:138.5px;top:235.50px;width:143px;height:1.4px;background:#2c2c2c"></div>
<div class="a" style="left:138.5px;top:276.10px;width:143px;height:1.4px;background:#2c2c2c"></div>
<div class="a" style="left:138.5px;top:372.20px;width:143px;height:1.4px;background:#2c2c2c"></div>
<div class="a" style="left:138.5px;top:440.55px;width:143px;height:1.4px;background:#2c2c2c"></div>
<div class="a" style="left:138.5px;top:564.40px;width:143px;height:1.4px;background:#2c2c2c"></div>
<div class="a" style="left:138.5px;top:605.00px;width:143px;height:1.4px;background:#2c2c2c"></div>
<div class="a" style="left:138.5px;top:645.60px;width:143px;height:1.4px;background:#2c2c2c"></div>
<div class="a" style="left:138.5px;top:686.20px;width:143px;height:1.4px;background:#2c2c2c"></div>
<div class="a" style="left:138.5px;top:726.80px;width:143px;height:1.4px;background:#2c2c2c"></div>
<div class="a" style="left:138.5px;top:767.40px;width:143px;height:1.4px;background:#2c2c2c"></div>
<div class="a" style="left:138.5px;top:808.00px;width:143px;height:1.4px;background:#2c2c2c"></div>
<div class="a" style="left:138.5px;top:848.60px;width:143px;height:1.4px;background:#2c2c2c"></div>
<div class="a" style="left:138.5px;top:889.20px;width:143px;height:1.4px;background:#2c2c2c"></div>
<div class="a" style="left:138.5px;top:929.80px;width:143px;height:1.4px;background:#2c2c2c"></div>
<div class="a" style="left:138.5px;top:970.40px;width:143px;height:1.4px;background:#2c2c2c"></div>
<div class="a" style="left:281.90px;top:155px;width:1.6px;height:800px;background:#292929"></div>
<div class="a" style="left:326.36px;top:155px;width:1.6px;height:800px;background:#292929"></div>
<div class="a" style="left:370.82px;top:155px;width:1.6px;height:800px;background:#292929"></div>
<div class="a" style="left:415.28px;top:155px;width:1.6px;height:800px;background:#292929"></div>
<div class="a" style="left:459.74px;top:155px;width:1.6px;height:800px;background:#292929"></div>
<div class="a" style="left:504.20px;top:155px;width:1.6px;height:800px;background:#292929"></div>
<div class="a" style="left:548.66px;top:155px;width:1.6px;height:800px;background:#292929"></div>
<div class="a" style="left:593.12px;top:155px;width:1.6px;height:800px;background:#292929"></div>
<div class="a" style="left:637.58px;top:155px;width:1.6px;height:800px;background:#292929"></div>
<div class="a" style="left:682.04px;top:155px;width:1.6px;height:800px;background:#292929"></div>
<div class="a" style="left:726.50px;top:155px;width:1.6px;height:800px;background:#292929"></div>
<div class="a" style="left:770.96px;top:155px;width:1.6px;height:800px;background:#292929"></div>
<div class="a" style="left:815.42px;top:155px;width:1.6px;height:800px;background:#292929"></div>
<div class="a" style="left:859.88px;top:155px;width:1.6px;height:800px;background:#292929"></div>
<div class="a" style="left:904.34px;top:155px;width:1.6px;height:800px;background:#292929"></div>
<div class="a" style="left:948.80px;top:155px;width:1.6px;height:800px;background:#292929"></div>
<div class="a" style="left:993.26px;top:155px;width:1.6px;height:800px;background:#292929"></div>
<div class="a" style="left:1037.72px;top:155px;width:1.6px;height:800px;background:#292929"></div>
<div class="a" style="left:1082.18px;top:155px;width:1.6px;height:800px;background:#292929"></div>
<div class="a" style="left:1126.64px;top:155px;width:1.6px;height:800px;background:#292929"></div>
<div class="a" style="left:1171.10px;top:155px;width:1.6px;height:800px;background:#292929"></div>
<div class="a" style="left:1215.56px;top:155px;width:1.6px;height:800px;background:#292929"></div>
<div class="a" style="left:1260.02px;top:155px;width:1.6px;height:800px;background:#292929"></div>
<div class="a" style="left:1304.48px;top:155px;width:1.6px;height:800px;background:#292929"></div>
<div class="a" style="left:1348.94px;top:155px;width:1.6px;height:800px;background:#292929"></div>
<div class="a" style="left:1393.40px;top:155px;width:1.6px;height:800px;background:#292929"></div>
<div class="a" style="left:1437.86px;top:155px;width:1.6px;height:800px;background:#292929"></div>
<div class="a" style="left:1482.32px;top:155px;width:1.6px;height:800px;background:#292929"></div>
<div class="a" style="left:1526.78px;top:155px;width:1.6px;height:800px;background:#292929"></div>
<div class="a" style="left:1571.24px;top:155px;width:1.6px;height:800px;background:#292929"></div>
<div class="a" style="left:1615.70px;top:155px;width:1.6px;height:800px;background:#292929"></div>
<div class="ev" style="left:593.72px;top:162.50px;width:220.20px;background:#43678a;">Flame 2 - 1st Hold</div>
<div class="ev" style="left:593.72px;top:203.10px;width:220.20px;background:#5e526f;padding-left:23px;"><svg style="position:absolute;left:6.5px;top:5.5px" width="11" height="11" viewBox="0 0 11 11"><path d="M8.12 3.7A3.6 3.6 0 1 1 5 1.9" fill="none" stroke="#ececec" stroke-width="1.7"/><path d="M4.4 -0.1L7.6 1.9L4.4 3.9Z" fill="#ececec"/></svg>Flame2018 - 2nd Hold</div>
<div class="ev" style="left:904.94px;top:203.10px;width:220.20px;background:#5e526f;padding-left:23px;"><svg style="position:absolute;left:6.5px;top:5.5px" width="11" height="11" viewBox="0 0 11 11"><path d="M8.12 3.7A3.6 3.6 0 1 1 5 1.9" fill="none" stroke="#ececec" stroke-width="1.7"/><path d="M4.4 -0.1L7.6 1.9L4.4 3.9Z" fill="#ececec"/></svg>Flame2018 - 2nd Hold</div>
<div class="ev" style="left:1216.16px;top:203.10px;width:220.20px;background:#5e526f;padding-left:23px;"><svg style="position:absolute;left:6.5px;top:5.5px" width="11" height="11" viewBox="0 0 11 11"><path d="M8.12 3.7A3.6 3.6 0 1 1 5 1.9" fill="none" stroke="#ececec" stroke-width="1.7"/><path d="M4.4 -0.1L7.6 1.9L4.4 3.9Z" fill="#ececec"/></svg>Flame2018 - 2nd Hold</div>
<div class="ev" style="left:371.42px;top:243.70px;width:220.20px;background:#43678a;padding-left:23px;"><svg style="position:absolute;left:6.5px;top:5.5px" width="11" height="11" viewBox="0 0 11 11"><path d="M8.12 3.7A3.6 3.6 0 1 1 5 1.9" fill="none" stroke="#ececec" stroke-width="1.7"/><path d="M4.4 -0.1L7.6 1.9L4.4 3.9Z" fill="#ececec"/></svg>The Bronze Bear - 1st Hold</div>
<div class="ev" style="left:682.64px;top:243.70px;width:220.20px;background:#43678a;padding-left:23px;"><svg style="position:absolute;left:6.5px;top:5.5px" width="11" height="11" viewBox="0 0 11 11"><path d="M8.12 3.7A3.6 3.6 0 1 1 5 1.9" fill="none" stroke="#ececec" stroke-width="1.7"/><path d="M4.4 -0.1L7.6 1.9L4.4 3.9Z" fill="#ececec"/></svg>The Bronze Bear - 1st Hold</div>
<div class="ev" style="left:993.86px;top:243.70px;width:220.20px;background:#43678a;padding-left:23px;"><svg style="position:absolute;left:6.5px;top:5.5px" width="11" height="11" viewBox="0 0 11 11"><path d="M8.12 3.7A3.6 3.6 0 1 1 5 1.9" fill="none" stroke="#ececec" stroke-width="1.7"/><path d="M4.4 -0.1L7.6 1.9L4.4 3.9Z" fill="#ececec"/></svg>The Bronze Bear - 1st Hold</div>
<div class="ev" style="left:282.50px;top:284.30px;width:220.20px;background:#476b3d;">Booked</div>
<div class="ev" style="left:415.88px;top:312.05px;width:86.82px;background:#555555;">Dream...</div>
<div class="ev" style="left:460.34px;top:339.80px;width:42.36px;background:#476b3d;">E</div>
<div class="ev" style="left:904.94px;top:284.30px;width:220.20px;background:#da6e09;">Flame Test - Available</div>
<div class="ev" style="left:282.50px;top:380.40px;width:842.64px;background:#476b3d;">Interlude - Booked</div>
<div class="ev" style="left:1260.62px;top:380.40px;width:131.28px;background:#43678a;">The Night Kee...</div>
<div class="ev" style="left:993.86px;top:408.15px;width:42.36px;background:#476b3d;">F</div>
<div class="ev" style="left:282.50px;top:448.75px;width:531.42px;background:#476b3d;">Golem - Booked</div>
<div class="ev" style="left:949.40px;top:448.75px;width:42.36px;background:#476b3d;">I</div>
<div class="ev" style="left:1055.00px;top:448.75px;width:50.00px;background:#476b3d;">...</div>
<div class="ev" style="left:1305.08px;top:448.75px;width:86.82px;background:#43678a;">The M...</div>
<div class="ev" style="left:1260.62px;top:476.50px;width:42.36px;background:#43678a;">[</div>
<div class="ev" style="left:1216.16px;top:532.00px;width:42.36px;background:#43678a;">I</div>
<div class="a" style="left:1038.2px;top:448.75px;width:2px;height:25.7px;background:#43678a"></div>
<div class="a" style="left:1216.4px;top:448.75px;width:2px;height:25.7px;background:#43678a"></div>
<div class="a" style="left:1216.4px;top:476.50px;width:2px;height:25.7px;background:#43678a"></div>
<div class="a" style="left:1216.4px;top:504.25px;width:2px;height:25.7px;background:#43678a"></div>
<div class="a" style="left:1260.8px;top:448.75px;width:2px;height:25.7px;background:#43678a"></div>
<div class="ev" style="left:904.94px;top:653.80px;width:220.20px;background:#476b3d;">Interlude - Booked</div>
<div class="ev" style="left:1260.62px;top:653.80px;width:86.82px;background:#43678a;">Interlu...</div>
<div class="ev" style="left:1394.00px;top:653.80px;width:42.36px;background:#555555;">T</div>
<div class="ev" style="left:282.50px;top:694.40px;width:531.42px;background:#476b3d;">Hogway - Booked</div>
<div class="ev" style="left:593.72px;top:735.00px;width:220.20px;background:#43678a;padding-left:23px;"><svg style="position:absolute;left:6.5px;top:5.5px" width="11" height="11" viewBox="0 0 11 11"><path d="M8.12 3.7A3.6 3.6 0 1 1 5 1.9" fill="none" stroke="#ececec" stroke-width="1.7"/><path d="M4.4 -0.1L7.6 1.9L4.4 3.9Z" fill="#ececec"/></svg>Quake - 1st Hold</div>
<div class="ev" style="left:904.94px;top:735.00px;width:220.20px;background:#43678a;padding-left:23px;"><svg style="position:absolute;left:6.5px;top:5.5px" width="11" height="11" viewBox="0 0 11 11"><path d="M8.12 3.7A3.6 3.6 0 1 1 5 1.9" fill="none" stroke="#ececec" stroke-width="1.7"/><path d="M4.4 -0.1L7.6 1.9L4.4 3.9Z" fill="#ececec"/></svg>Quake - 1st Hold</div>
<div class="ev" style="left:1216.16px;top:735.00px;width:220.20px;background:#43678a;padding-left:23px;"><svg style="position:absolute;left:6.5px;top:5.5px" width="11" height="11" viewBox="0 0 11 11"><path d="M8.12 3.7A3.6 3.6 0 1 1 5 1.9" fill="none" stroke="#ececec" stroke-width="1.7"/><path d="M4.4 -0.1L7.6 1.9L4.4 3.9Z" fill="#ececec"/></svg>Quake - 1st Hold</div>
<div class="ev" style="left:593.72px;top:775.60px;width:220.20px;background:#555555;">Flame 2</div>
<div class="ev" style="left:593.72px;top:856.80px;width:220.20px;background:#da6e09;padding-left:23px;"><svg style="position:absolute;left:6.5px;top:5.5px" width="11" height="11" viewBox="0 0 11 11"><path d="M8.12 3.7A3.6 3.6 0 1 1 5 1.9" fill="none" stroke="#ececec" stroke-width="1.7"/><path d="M4.4 -0.1L7.6 1.9L4.4 3.9Z" fill="#ececec"/></svg>Flame 2019 - Available</div>
<div class="ev" style="left:904.94px;top:856.80px;width:220.20px;background:#da6e09;padding-left:23px;"><svg style="position:absolute;left:6.5px;top:5.5px" width="11" height="11" viewBox="0 0 11 11"><path d="M8.12 3.7A3.6 3.6 0 1 1 5 1.9" fill="none" stroke="#ececec" stroke-width="1.7"/><path d="M4.4 -0.1L7.6 1.9L4.4 3.9Z" fill="#ececec"/></svg>Flame 2019 - Available</div>
<div class="ev" style="left:1216.16px;top:856.80px;width:220.20px;background:#da6e09;padding-left:23px;"><svg style="position:absolute;left:6.5px;top:5.5px" width="11" height="11" viewBox="0 0 11 11"><path d="M8.12 3.7A3.6 3.6 0 1 1 5 1.9" fill="none" stroke="#ececec" stroke-width="1.7"/><path d="M4.4 -0.1L7.6 1.9L4.4 3.9Z" fill="#ececec"/></svg>Flame 2019 - Available</div>
<div class="ev" style="left:593.72px;top:938.00px;width:220.20px;background:#da6e09;padding-left:23px;"><svg style="position:absolute;left:6.5px;top:5.5px" width="11" height="11" viewBox="0 0 11 11"><path d="M8.12 3.7A3.6 3.6 0 1 1 5 1.9" fill="none" stroke="#ececec" stroke-width="1.7"/><path d="M4.4 -0.1L7.6 1.9L4.4 3.9Z" fill="#ececec"/></svg>Premiere - Available</div>
<div class="ev" style="left:904.94px;top:938.00px;width:220.20px;background:#da6e09;padding-left:23px;"><svg style="position:absolute;left:6.5px;top:5.5px" width="11" height="11" viewBox="0 0 11 11"><path d="M8.12 3.7A3.6 3.6 0 1 1 5 1.9" fill="none" stroke="#ececec" stroke-width="1.7"/><path d="M4.4 -0.1L7.6 1.9L4.4 3.9Z" fill="#ececec"/></svg>Premiere - Available</div>
<div class="ev" style="left:1216.16px;top:938.00px;width:220.20px;background:#da6e09;padding-left:23px;"><svg style="position:absolute;left:6.5px;top:5.5px" width="11" height="11" viewBox="0 0 11 11"><path d="M8.12 3.7A3.6 3.6 0 1 1 5 1.9" fill="none" stroke="#ececec" stroke-width="1.7"/><path d="M4.4 -0.1L7.6 1.9L4.4 3.9Z" fill="#ececec"/></svg>Premiere - Available</div>
<div class="a" style="left:138.5px;top:951.5px;width:1521.5px;height:35px;background:#36485a"></div>
<div class="a" style="left:153.8px;top:958px;width:22px;height:22px;border-radius:50%;border:1.3px solid #26333f;background:transparent"></div>
<div class="a" style="left:177.6px;top:958px;width:22px;height:22px;border-radius:50%;border:1.3px solid #26333f;background:transparent"></div>
<div class="a" style="left:200.5px;top:958px;width:22px;height:22px;border-radius:50%;border:1.3px solid #26333f;background:#6a7b8b"></div>
<div class="a" style="left:223.4px;top:958px;width:22px;height:22px;border-radius:50%;border:1.3px solid #26333f;background:transparent"></div>
<div class="a" style="left:248.2px;top:958px;width:22px;height:22px;border-radius:50%;border:1.3px solid #26333f;background:transparent"></div>
<div class="a" style="left:272px;top:958px;width:22px;height:22px;border-radius:50%;border:1.3px solid #26333f;background:transparent"></div>
<svg class="a" style="left:159px;top:964px" width="10" height="9" viewBox="0 0 10 9"><rect x="1.5" y="1" width="1.3" height="7" fill="#95a1ac"/><path d="M8.5 1V8L3.5 4.5Z" fill="#95a1ac"/></svg>
<svg class="a" style="left:184px;top:964px" width="10" height="9" viewBox="0 0 10 9"><path d="M7 1V8L2.5 4.5Z" fill="#95a1ac"/></svg>
<div class="t" style="left:206.5px;top:962px;font-size:12px;color:#f0f0f0;line-height:14px">1</div>
<div class="t" style="left:230.5px;top:962px;font-size:12px;color:#5db4e6;line-height:14px">2</div>
<svg class="a" style="left:255px;top:964px" width="10" height="9" viewBox="0 0 10 9"><path d="M3 1V8L7.5 4.5Z" fill="#e6e6e6"/></svg>
<svg class="a" style="left:278px;top:964px" width="10" height="9" viewBox="0 0 10 9"><path d="M1.5 1V8L6.5 4.5Z" fill="#e6e6e6"/><rect x="7.2" y="1" width="1.3" height="7" fill="#e6e6e6"/></svg>
<div class="a" style="left:314.5px;top:957.5px;width:46px;height:22px;border:1px solid #2b3b4a;border-radius:3px"></div>
<div class="t" style="left:318.5px;top:962px;font-size:12px;color:#d8d8d8;line-height:14px">25</div>
<svg class="a" style="left:345px;top:965.5px" width="8" height="6" viewBox="0 0 8 6"><path d="M0.5 0L4 6L7.5 0Z" fill="#e8e8e8"/></svg>
<div class="t" style="left:365px;top:962px;font-size:12px;color:#d8dde2;letter-spacing:0px;line-height:14px">items per page</div>
<div class="t" style="left:1550px;top:962px;font-size:12px;color:#c0c7ce;letter-spacing:0.1px;line-height:14px">1 - 25 of 39 items</div>
</body></html>
